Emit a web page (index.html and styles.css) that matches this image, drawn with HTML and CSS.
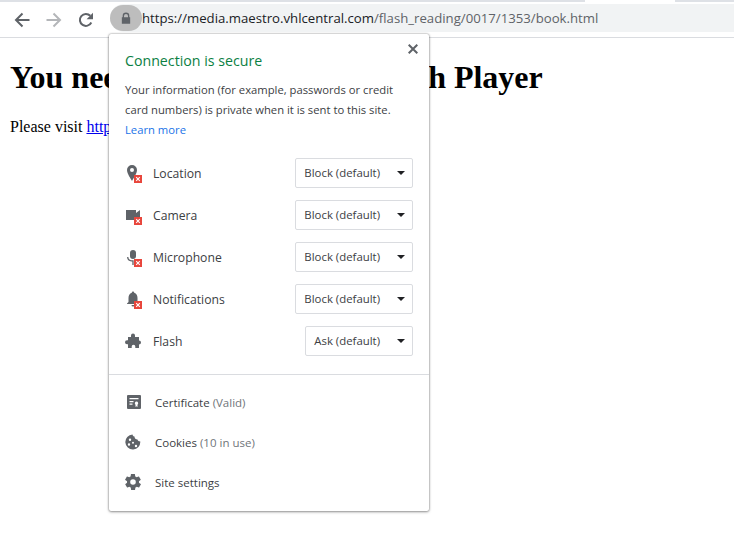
FILE: index.html
```html
<!DOCTYPE html>
<html lang="en">
<head>
<meta charset="utf-8">
<title>book.html</title>
<link rel="stylesheet" href="styles.css">
</head>
<body>
<div class="tabstrip"><div class="tabstrip-tab"></div></div>
<header class="toolbar">
  <button class="nav" aria-label="Back"><svg width="16" height="16" viewBox="0 0 16 16"><path d="M15.5 8H2.5M8.5 1.5L2 8l6.500 6.500" fill="none" stroke="#5f6368" stroke-width="2"/></svg></button>
  <button class="nav" aria-label="Forward"><svg width="16" height="16" viewBox="0 0 16 16"><path d="M.5 8h13M7.500 1.500L14 8l-6.500 6.500" fill="none" stroke="#b4b6b9" stroke-width="2"/></svg></button>
  <button class="nav" aria-label="Reload"><svg width="16" height="16" viewBox="0 0 16 16"><path d="M13.300 10.500A6 6 0 1 1 12.300 3.800" fill="none" stroke="#5f6368" stroke-width="2"/><path d="M15 .8v6.400H8.600z" fill="#5f6368"/></svg></button>
  <div class="omnibox">
    <span class="chip"><svg width="10" height="12" viewBox="0 0 12 14"><path d="M2 6V4.500a4 4 0 0 1 8 0V6h1v8H1V6zm1.600 0h4.800V4.500a2.400 2.400 0 0 0-4.800 0z" fill="#5f6368"/></svg></span>
    <span class="url"><span class="url-host">https://media.maestro.vhlcentral.com</span>/flash_reading/0017/1353/book.html</span>
  </div>
</header>
<main class="page">
  <h1 class="headline">You need to upgrade your Flash Player</h1>
  <p class="notice">Please visit <a href="#">http://get.adobe.com/flashplayer</a></p>
</main>
<section class="popup">
  <button class="close" aria-label="Close"><svg width="10" height="10" viewBox="0 0 10 10"><path d="M.7.7l8.600 8.600M9.300.7L.7 9.300" stroke="#5f6368" stroke-width="2"/></svg></button>
  <div class="security">
    <h2 class="secure-title">Connection is secure</h2>
    <p class="secure-text">Your information (for example, passwords or credit card numbers) is private when it is sent to this site. <a class="learn" href="#">Learn more</a></p>
  </div>
  <div class="perms">
    <div class="perm">
      <span class="perm-icon"><svg width="16" height="16" viewBox="0 0 16 16"><path fill-rule="evenodd" d="M7 0a5 5 0 0 1 5 5c0 3.700-4 9-5 11C6 14 2 8.700 2 5a5 5 0 0 1 5-5zm0 3a2 2 0 1 0 0 4 2 2 0 0 0 0-4z" fill="#5f6368"/></svg><svg class="badge" width="8" height="8" viewBox="0 0 8 8"><rect width="8" height="8" fill="#e8463c"/><path d="M2.200 2.200l3.600 3.600M5.800 2.200L2.200 5.800" stroke="#fff" stroke-width="1.100"/></svg></span>
      <span class="perm-label">Location</span>
      <div class="select"><span>Block (default)</span><i class="caret"></i></div>
    </div>
    <div class="perm">
      <span class="perm-icon"><svg width="16" height="16" viewBox="0 0 16 16"><path d="M1 3h10v3l4-3v10H1z" fill="#5f6368"/></svg><svg class="badge" width="8" height="8" viewBox="0 0 8 8"><rect width="8" height="8" fill="#e8463c"/><path d="M2.200 2.200l3.600 3.600M5.800 2.200L2.200 5.800" stroke="#fff" stroke-width="1.100"/></svg></span>
      <span class="perm-label">Camera</span>
      <div class="select"><span>Block (default)</span><i class="caret"></i></div>
    </div>
    <div class="perm">
      <span class="perm-icon"><svg width="16" height="16" viewBox="0 0 16 16"><rect x="5" y="1" width="6" height="9" rx="3" fill="#5f6368"/><path d="M2.700 8c0 2.700 2.300 4 5.300 4v4" fill="none" stroke="#5f6368" stroke-width="1.300"/></svg><svg class="badge" width="8" height="8" viewBox="0 0 8 8"><rect width="8" height="8" fill="#e8463c"/><path d="M2.200 2.200l3.600 3.600M5.800 2.200L2.200 5.800" stroke="#fff" stroke-width="1.100"/></svg></span>
      <span class="perm-label">Microphone</span>
      <div class="select"><span>Block (default)</span><i class="caret"></i></div>
    </div>
    <div class="perm">
      <span class="perm-icon"><svg width="16" height="16" viewBox="0 0 16 16"><path d="M8 .5a1.200 1.200 0 0 1 1.200 1.300C11.500 2.500 12.500 4.500 12.500 7v4l1.500 1.500v.5H2v-.5L3.500 11V7c0-2.500 1-4.500 3.300-5.200A1.200 1.200 0 0 1 8 .5zM6.500 14h3a1.500 1.500 0 0 1-3 0z" fill="#5f6368"/></svg><svg class="badge" width="8" height="8" viewBox="0 0 8 8"><rect width="8" height="8" fill="#e8463c"/><path d="M2.200 2.200l3.600 3.600M5.800 2.200L2.200 5.800" stroke="#fff" stroke-width="1.100"/></svg></span>
      <span class="perm-label">Notifications</span>
      <div class="select"><span>Block (default)</span><i class="caret"></i></div>
    </div>
    <div class="perm">
      <span class="perm-icon"><svg width="16" height="16" viewBox="0 0 16 16"><path d="M8 .5a2 2 0 0 1 2 2V4h4v3.500a2 2 0 0 1 0 4V15h-3.700v-1.500a1.800 1.800 0 0 0-3.600 0V15H3v-3.700H2a2 2 0 0 1 0-4h1V4h3V2.500a2 2 0 0 1 2-2z" fill="#5f6368"/></svg></span>
      <span class="perm-label">Flash</span>
      <div class="select"><span>Ask (default)</span><i class="caret"></i></div>
    </div>
  </div>
  <div class="links">
    <div class="link-row">
      <span class="link-icon cert"><svg width="14" height="14" viewBox="0 0 14 14"><path fill-rule="evenodd" d="M1 0h12a1 1 0 0 1 1 1v12a1 1 0 0 1-1 1H1a1 1 0 0 1-1-1V1a1 1 0 0 1 1-1zm1.500 3v1.300h9V3zm0 3v1.200h4V6zm0 2.500v1.200h3V8.500zM9.500 6.500a1.800 1.800 0 0 0-1 3.200V12l1-.7 1 .7V9.700a1.800 1.800 0 0 0-1-3.200z" fill="#5f6368"/></svg></span>
      <span>Certificate <span class="muted">(Valid)</span></span>
    </div>
    <div class="link-row">
      <span class="link-icon"><svg width="16" height="16" viewBox="0 0 16 16"><path fill-rule="evenodd" d="M7.500.5c.3 1.500 1.200 2 2 2 0 1.700 1.300 3 3 3 .2 1.100 1.300 2 2.800 2A7.500 7.500 0 1 1 7.500.5zM5 4.500a1.200 1.200 0 1 0 0 2.400 1.200 1.200 0 0 0 0-2.400zM4 9.300a1.200 1.200 0 1 0 0 2.400 1.200 1.200 0 0 0 0-2.400zm4-1.500a1 1 0 1 0 0 2 1 1 0 0 0 0-2zm3 3a1.200 1.200 0 1 0 0 2.400 1.200 1.200 0 0 0 0-2.400z" fill="#5f6368"/></svg></span>
      <span>Cookies <span class="muted">(10 in use)</span></span>
    </div>
    <div class="link-row">
      <span class="link-icon"><svg width="16" height="16" viewBox="2 2 20 20"><path d="M19.400 13c.1-.3.100-.7.100-1s0-.7-.1-1l2.100-1.600c.2-.2.200-.4.100-.6l-2-3.500c-.1-.2-.4-.3-.6-.2l-2.500 1c-.5-.4-1.100-.7-1.700-1l-.4-2.700c0-.2-.2-.4-.5-.4h-4c-.3 0-.5.200-.5.400l-.4 2.700c-.6.300-1.200.6-1.700 1l-2.500-1c-.2-.1-.5 0-.6.200l-2 3.500c-.1.200-.1.400.1.600L4.600 11c-.1.300-.1.700-.1 1s0 .7.100 1l-2.100 1.600c-.2.200-.2.400-.1.600l2 3.500c.1.200.4.300.6.200l2.500-1c.5.400 1.100.7 1.700 1l.4 2.700c0 .2.200.4.500.4h4c.3 0 .5-.2.500-.4l.4-2.700c.6-.3 1.200-.6 1.700-1l2.500 1c.2.100.5 0 .6-.2l2-3.500c.1-.2.100-.4-.1-.6zM12 15.500a3.500 3.500 0 1 1 0-7 3.500 3.500 0 0 1 0 7z" fill="#5f6368"/></svg></span>
      <span>Site settings</span>
    </div>
  </div>
</section>
</body>
</html>
```
FILE: styles.css
```css
* { box-sizing: border-box; }
html, body { margin: 0; padding: 0; }
body { width: 734px; height: 560px; background: #fff; overflow: hidden; position: relative; font-family: "Liberation Serif", serif; color: #000; }

.tabstrip { height: 2px; background: #dee1e6; display: flex; justify-content: flex-end; padding-right: 59px; }
.tabstrip-tab { width: 90px; background: #fff; }

.toolbar { height: 36px; display: flex; align-items: center; border-bottom: 1px solid #dadce0; padding-left: 6px; background: #fff; }
.nav { width: 32px; height: 32px; border: 0; padding: 0; background: none; display: flex; align-items: center; justify-content: center; }
.omnibox { margin-left: 8px; flex: 1; height: 28px; margin-top: -3px; background: #f1f3f4; border-radius: 14px 0 0 14px; display: flex; align-items: center; }
.chip { width: 32px; height: 26px; background: #bdbdbd; border-radius: 13px; display: flex; align-items: center; justify-content: center; }
.url { font: 13.2px/28px "Open Sans", sans-serif; color: #5f6368; white-space: nowrap; }
.url-host { color: #202124; }

.page { padding: 0 10px; }
.headline { font-size: 32px; font-weight: 700; line-height: 37px; margin: 21px 0 0; white-space: nowrap; }
.notice { font-size: 16px; line-height: 18px; margin: 22px 0 0; }
.notice a { color: #0000ee; }

.popup { position: absolute; left: 109px; top: 34px; width: 320px; height: 477px; background: #fff; border-radius: 2px; box-shadow: 0 0 2px rgba(0,0,0,.45), 0 1px 3px rgba(0,0,0,.35); font-family: "Open Sans", sans-serif; display: flex; flex-direction: column; }
.close { position: absolute; top: 9px; right: 10px; width: 12px; height: 12px; padding: 1px; border: 0; background: none; display: flex; }
.security { padding: 17px 16px 0; }
.secure-title { margin: 0; font-size: 14.2px; font-weight: 400; line-height: 20px; color: #0b8043; }
.secure-text { margin: 9px 0 0; font-size: 11.25px; line-height: 20px; color: #3c4043; }
.learn { color: #1a73e8; text-decoration: none; display: block; }

.perms { display: flex; flex-direction: column; gap: 12px; padding: 18px 16px; border-bottom: 1px solid #dadce0; }
.perm { display: flex; align-items: center; height: 30px; font-size: 12.2px; color: #3c4043; }
.perm-icon { position: relative; width: 28px; height: 16px; display: block; flex: none; }
.badge { position: absolute; left: 9px; top: 10px; }
.perm-label { flex: 1; }
.select { height: 30px; border: 1px solid #dadce0; border-radius: 2px; display: flex; align-items: center; gap: 17px; padding: 0 7px 1px 8px; font-size: 11.4px; }
.caret { width: 0; height: 0; border: 4px solid transparent; border-top: 4px solid #202124; border-bottom: 0; }

.links { display: flex; flex-direction: column; padding: 7px 16px 0; }
.link-row { height: 40px; display: flex; align-items: center; font-size: 11.5px; color: #3c4043; }
.link-icon { width: 30px; display: flex; align-items: center; flex: none; }
.cert { padding-left: 2px; }
.muted { color: #70757a; }
```
